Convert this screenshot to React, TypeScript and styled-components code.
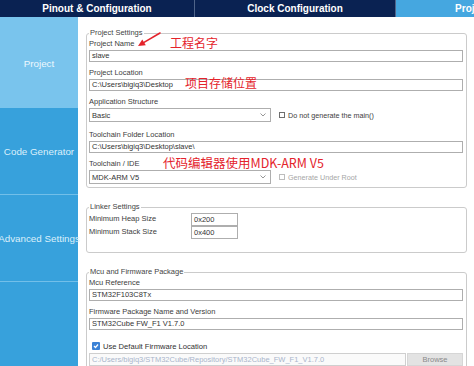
import React from 'react';
import styled, { createGlobalStyle } from 'styled-components';

const GlobalStyle = createGlobalStyle`
  html, body {
    margin: 0;
    padding: 0;
    background: #ffffff;
  }
  body {
    font-family: "Liberation Sans", Arial, sans-serif;
    overflow: hidden;
  }
`;

const Page = styled.div`
  position: relative;
  width: 474px;
  height: 366px;
  display: flex;
  flex-direction: column;
  overflow: hidden;
`;

const TabBar = styled.div`
  display: flex;
  height: 17px;
  background: #0a2252;
  flex-shrink: 0;
  overflow: hidden;
`;

interface TabProps {
  $width: string;
  $active?: boolean;
}

const Tab = styled.div<TabProps>`
  width: ${(p: TabProps) => p.$width};
  flex: none;
  display: flex;
  align-items: center;
  justify-content: center;
  overflow: hidden;
  white-space: nowrap;
  color: #ffffff;
  font-size: 10px;
  font-weight: bold;
  background: ${(p: TabProps) => (p.$active ? '#45a7e0' : 'transparent')};
  border-right: 1px solid ${(p: TabProps) => (p.$active ? 'transparent' : '#4f6489')};
`;

const Body = styled.div`
  flex: 1;
  display: flex;
  min-height: 0;
`;

const Sidebar = styled.div`
  width: 78px;
  flex-shrink: 0;
  display: flex;
  flex-direction: column;
  background: #37a1dc;
`;

interface SideItemProps {
  $active?: boolean;
  $height?: string;
  $divider?: boolean;
}

const SideItem = styled.div<SideItemProps>`
  height: ${(p: SideItemProps) => p.$height || 'auto'};
  flex: ${(p: SideItemProps) => (p.$height ? 'none' : '1')};
  display: flex;
  align-items: center;
  justify-content: center;
  white-space: nowrap;
  font-size: 9.8px;
  color: ${(p: SideItemProps) => (p.$active ? '#eef8fe' : '#dcf0fb')};
  background: ${(p: SideItemProps) => (p.$active ? '#79c4ed' : '#37a1dc')};
  border-top: 1px solid ${(p: SideItemProps) => (p.$divider ? '#72bfe9' : 'transparent')};
  box-sizing: border-box;
`;

const Main = styled.div`
  flex: 1;
  display: flex;
  flex-direction: column;
  gap: 14px;
  padding: 11px 7px 0 8px;
  min-width: 0;
`;

interface GroupProps {
  $padBottom?: number;
}

const Group = styled.fieldset<GroupProps>`
  margin: 0;
  min-width: 0;
  padding: 1px 3px ${(p: GroupProps) => p.$padBottom ?? 3}px 2px;
  border: 1px solid #cbcbcb;
  border-radius: 3px;
`;

const Legend = styled.legend`
  padding: 0 1px;
  margin: 0;
  font-size: 7.5px;
  line-height: 10px;
  color: #444444;
`;

interface FieldProps {
  $gap?: number;
}

const Field = styled.div<FieldProps>`
  margin-bottom: ${(p: FieldProps) => (p.$gap === undefined ? 6 : p.$gap)}px;
`;

const FieldLabel = styled.div`
  font-size: 7.5px;
  line-height: 10px;
  color: #3c3c3c;
  margin-bottom: 1px;
  white-space: nowrap;
`;

interface TextBoxProps {
  $disabled?: boolean;
  $height?: number;
  $grow?: boolean;
}

const TextBox = styled.div<TextBoxProps>`
  box-sizing: border-box;
  flex: ${(p: TextBoxProps) => (p.$grow ? '1' : 'none')};
  height: ${(p: TextBoxProps) => p.$height || 12}px;
  border: 1px solid ${(p: TextBoxProps) => (p.$disabled ? '#cfcfcf' : '#aeaeae')};
  background: ${(p: TextBoxProps) => (p.$disabled ? '#fafafa' : '#ffffff')};
  padding: 0 2px;
  font-size: 7.5px;
  line-height: ${(p: TextBoxProps) => (p.$height || 12) - 2}px;
  color: ${(p: TextBoxProps) => (p.$disabled ? '#a9b5cb' : '#333333')};
  white-space: nowrap;
  overflow: hidden;
`;

const SelectRow = styled.div`
  display: flex;
  align-items: center;
  gap: 8px;
`;

const SelectBox = styled.div`
  box-sizing: border-box;
  width: 182px;
  height: 14px;
  border: 1px solid #aeaeae;
  background: #ffffff;
  padding: 0 4px 0 2px;
  display: flex;
  align-items: center;
  justify-content: space-between;
  font-size: 7.5px;
  color: #333333;
`;

interface CheckProps {
  $disabled?: boolean;
}

const CheckLabel = styled.div<CheckProps>`
  display: flex;
  align-items: center;
  gap: 3px;
  font-size: 7.2px;
  color: ${(p: CheckProps) => (p.$disabled ? '#a6a6a6' : '#3c3c3c')};
  white-space: nowrap;
`;

const CheckSquare = styled.span<CheckProps>`
  box-sizing: border-box;
  width: 6px;
  height: 6px;
  border: 1px solid ${(p: CheckProps) => (p.$disabled ? '#bdbdbd' : '#6e6e6e')};
  background: #ffffff;
`;

const LinkerRow = styled.div`
  display: grid;
  grid-template-columns: 102px 47px;
  align-items: center;
  height: 13px;
`;

const CheckedRow = styled.div`
  display: flex;
  align-items: center;
  gap: 3px;
  height: 14px;
  margin: 9px 0 0 3px;
  font-size: 7.6px;
  color: #2f2f2f;
`;

const CheckedBox = styled.span`
  width: 8px;
  height: 8px;
  border-radius: 1px;
  background: #3b82d6;
  display: flex;
  align-items: center;
  justify-content: center;
`;

const BrowseRow = styled.div`
  display: flex;
  gap: 1px;
  height: 13px;
`;

const BrowseButton = styled.div`
  box-sizing: border-box;
  width: 56px;
  background: #e3e3e3;
  border: 1px solid #d6d6d6;
  display: flex;
  align-items: center;
  justify-content: center;
  font-size: 7.5px;
  color: #8a8a8a;
`;

interface NoteProps {
  $x: number;
  $y: number;
  $size?: number;
}

const Note = styled.div<NoteProps>`
  position: absolute;
  left: ${(p: NoteProps) => p.$x}px;
  top: ${(p: NoteProps) => p.$y}px;
  font-family: "Noto Sans CJK SC", "Liberation Sans", sans-serif;
  font-size: ${(p: NoteProps) => p.$size || 12}px;
  line-height: 1;
  color: #e4232b;
  white-space: nowrap;
`;

const Arrow = styled.svg`
  position: absolute;
  left: 134px;
  top: 29px;
`;

const Chevron = () => (
  <svg width="6" height="4" viewBox="0 0 6 4">
    <path d="M0.5 0.5 L3 3 L5.5 0.5" fill="none" stroke="#8a8a8a" strokeWidth="0.9" />
  </svg>
);

const App: React.FC = () => {
  return (
    <Page>
      <GlobalStyle />
      <TabBar>
        <Tab $width="194px">Pinout &amp; Configuration</Tab>
        <Tab $width="200px">Clock Configuration</Tab>
        <Tab $width="196px" $active>Project Manager</Tab>
      </TabBar>
      <Body>
        <Sidebar>
          <SideItem $active $height="91px">Project</SideItem>
          <SideItem $height="86px">Code Generator</SideItem>
          <SideItem $height="87px" $divider>Advanced Settings</SideItem>
          <SideItem $divider />
        </Sidebar>
        <Main>
          <Group>
            <Legend>Project Settings</Legend>
            <Field>
              <FieldLabel>Project Name</FieldLabel>
              <TextBox>slave</TextBox>
            </Field>
            <Field>
              <FieldLabel>Project Location</FieldLabel>
              <TextBox>C:\Users\bigiq3\Desktop</TextBox>
            </Field>
            <Field $gap={8}>
              <FieldLabel>Application Structure</FieldLabel>
              <SelectRow>
                <SelectBox>
                  Basic
                  <Chevron />
                </SelectBox>
                <CheckLabel>
                  <CheckSquare />
                  Do not generate the main()
                </CheckLabel>
              </SelectRow>
            </Field>
            <Field>
              <FieldLabel>Toolchain Folder Location</FieldLabel>
              <TextBox>C:\Users\bigiq3\Desktop\slave\</TextBox>
            </Field>
            <Field $gap={0}>
              <FieldLabel>Toolchain / IDE</FieldLabel>
              <SelectRow>
                <SelectBox>
                  MDK-ARM V5
                  <Chevron />
                </SelectBox>
                <CheckLabel $disabled>
                  <CheckSquare $disabled />
                  Generate Under Root
                </CheckLabel>
              </SelectRow>
            </Field>
          </Group>

          <Group $padBottom={13}>
            <Legend>Linker Settings</Legend>
            <LinkerRow>
              <FieldLabel>Minimum Heap Size</FieldLabel>
              <TextBox $height={13}>0x200</TextBox>
            </LinkerRow>
            <LinkerRow>
              <FieldLabel>Minimum Stack Size</FieldLabel>
              <TextBox $height={13}>0x400</TextBox>
            </LinkerRow>
          </Group>

          <Group>
            <Legend>Mcu and Firmware Package</Legend>
            <Field>
              <FieldLabel>Mcu Reference</FieldLabel>
              <TextBox>STM32F103C8Tx</TextBox>
            </Field>
            <Field $gap={0}>
              <FieldLabel>Firmware Package Name and Version</FieldLabel>
              <TextBox>STM32Cube FW_F1 V1.7.0</TextBox>
            </Field>
            <CheckedRow>
              <CheckedBox>
                <svg width="6" height="6" viewBox="0 0 6 6">
                  <path d="M1 3 L2.5 4.5 L5 1.5" fill="none" stroke="#ffffff" strokeWidth="1.2" />
                </svg>
              </CheckedBox>
              Use Default Firmware Location
            </CheckedRow>
            <BrowseRow>
              <TextBox $disabled $grow $height={13}>
                C:/Users/bigiq3/STM32Cube/Repository/STM32Cube_FW_F1_V1.7.0
              </TextBox>
              <BrowseButton>Browse</BrowseButton>
            </BrowseRow>
          </Group>
        </Main>
      </Body>

      <Arrow width="30" height="20" viewBox="0 0 30 20">
        <line x1="26" y1="4" x2="10" y2="13.4" stroke="#e4232b" strokeWidth="1.6" strokeLinecap="round" />
        <polygon points="4,17 11.8,16.3 8.3,10.4" fill="#e4232b" />
      </Arrow>
      <Note $x={170} $y={37}>工程名字</Note>
      <Note $x={185} $y={77}>项目存储位置</Note>
      <Note $x={163} $y={157} $size={12.5}>代码编辑器使用MDK-ARM V5</Note>
    </Page>
  );
};

export default App;
